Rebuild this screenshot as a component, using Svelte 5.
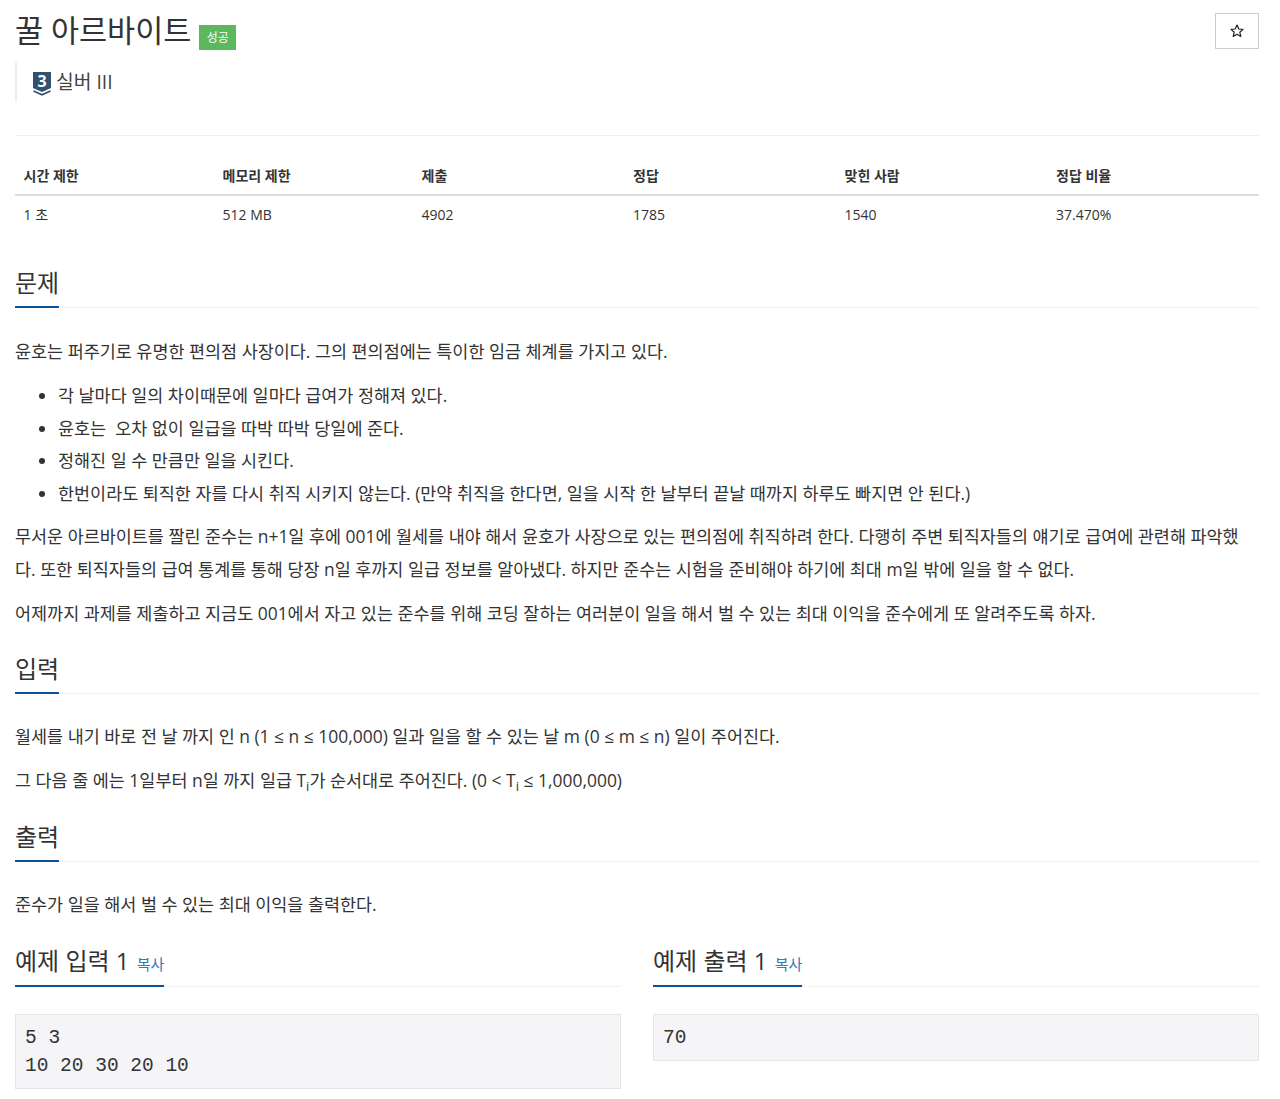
<script>
  const stats = [
    ['시간 제한', '1 초'],
    ['메모리 제한', '512 MB'],
    ['제출', '4902'],
    ['정답', '1785'],
    ['맞힌 사람', '1540'],
    ['정답 비율', '37.470%']
  ];
</script>

<div class="page">
  <header class="title">
    <div class="head-row">
      <h1>꿀 아르바이트 <span class="label">성공</span></h1>
      <button class="star" aria-label="즐겨찾기">
        <svg viewBox="0 0 16 16" width="16" height="16" aria-hidden="true">
          <path d="M8 2l1.8 4 4.2.4-3.2 2.8 1 4.3L8 11.2l-3.8 2.3 1-4.3L2 6.400 6.200 6z" fill="none" stroke="#222" stroke-width="1.2" stroke-linejoin="round" />
        </svg>
      </button>
    </div>
    <div class="tier">
      <svg class="tier-icon" viewBox="0 0 20 25" width="20" height="25" aria-hidden="true">
        <path d="M1 1h18v16l-9 4-9-4z" fill="#34506f" />
        <path d="M1.500 20l8.500 3.800 8.500-3.800" fill="none" stroke="#34506f" stroke-width="1.600" />
        <text x="10" y="16" text-anchor="middle" class="tier-num">3</text>
      </svg>
      <span class="tier-name">실버 III</span>
    </div>
  </header>

  <table>
    <thead>
      <tr>{#each stats as s}<th>{s[0]}</th>{/each}</tr>
    </thead>
    <tbody>
      <tr>{#each stats as s}<td>{s[1]}</td>{/each}</tr>
    </tbody>
  </table>

  <section class="problem">
    <div class="headline"><h2>문제</h2></div>
    <p>윤호는 퍼주기로 유명한 편의점 사장이다. 그의 편의점에는 특이한 임금 체계를 가지고 있다.</p>
    <ul>
      <li>각 날마다 일의 차이때문에 일마다 급여가 정해져 있다.</li>
      <li>윤호는&nbsp; 오차 없이 일급을 따박 따박 당일에 준다.</li>
      <li>정해진 일 수 만큼만 일을 시킨다.</li>
      <li>한번이라도 퇴직한 자를 다시 취직 시키지 않는다. (만약 취직을 한다면, 일을 시작 한 날부터 끝날 때까지 하루도 빠지면 안 된다.)</li>
    </ul>
    <p>무서운 아르바이트를 짤린 준수는 n+1일 후에 001에 월세를 내야 해서 윤호가 사장으로 있는 편의점에 취직하려 한다. 다행히 주변 퇴직자들의 얘기로 급여에 관련해 파악했다. 또한 퇴직자들의 급여 통계를 통해 당장 n일 후까지 일급 정보를 알아냈다. 하지만 준수는 시험을 준비해야 하기에 최대 m일 밖에 일을 할 수 없다.</p>
    <p>어제까지 과제를 제출하고 지금도 001에서 자고 있는 준수를 위해 코딩 잘하는 여러분이 일을 해서 벌 수 있는 최대 이익을 준수에게 또 알려주도록 하자.</p>
  </section>

  <section>
    <div class="headline"><h2>입력</h2></div>
    <p>월세를 내기 바로 전 날 까지 인 n (1 ≤ n ≤ 100,000) 일과 일을 할 수 있는 날 m (0 ≤ m ≤ n) 일이 주어진다.</p>
    <p>그 다음 줄 에는 1일부터 n일 까지 일급 T<sub>i</sub>가 순서대로 주어진다. (0 &lt; T<sub>i</sub> ≤ 1,000,000)</p>
  </section>

  <section class="output">
    <div class="headline"><h2>출력</h2></div>
    <p>준수가 일을 해서 벌 수 있는 최대 이익을 출력한다.</p>
  </section>

  <div class="samples">
    <section>
      <div class="headline"><h2>예제 입력 1 <a href="#copy" class="copy">복사</a></h2></div>
      <pre>5 3
10 20 30 20 10</pre>
    </section>
    <section>
      <div class="headline"><h2>예제 출력 1 <a href="#copy" class="copy">복사</a></h2></div>
      <pre>70</pre>
    </section>
  </div>
</div>

<style>
  :global(body) {
    background: #fff;
  }
  .page {
    padding: 0 21px 0 15px;
    height: 1099px;
    overflow: hidden;
    box-sizing: border-box;
    color: #333;
    font-family: 'Open Sans', 'Noto Sans CJK KR', sans-serif;
    font-size: 17.45px;
  }
  .title {
    padding-bottom: 33px;
    border-bottom: 1px solid #eee;
    margin-bottom: 20px;
  }
  .head-row {
    display: flex;
    justify-content: space-between;
    align-items: flex-start;
    height: 36px;
    padding-top: 13px;
  }
  h1 {
    margin: 1px 0 0;
    font-size: 30.5px;
    font-weight: 400;
    line-height: 33px;
  }
  .label {
    display: inline-block;
    background: #5cb85c;
    color: #fff;
    font-size: 12px;
    font-weight: 400;
    line-height: 25px;
    height: 25px;
    width: 37px;
    text-align: center;
    vertical-align: 0;
  }
  .star {
    display: flex;
    align-items: center;
    justify-content: center;
    width: 44px;
    height: 36px;
    background: #fff;
    border: 1px solid #ccc;
    padding: 0;
  }
  .tier {
    display: flex;
    align-items: center;
    gap: 4px;
    height: 40px;
    margin-top: 13px;
    padding-left: 15px;
    border-left: 2px solid #eee;
    font-size: 19.3px;
    color: #444;
  }
  .tier-icon {
    margin-top: 3px;
  }
  .tier-name {
    margin-top: -3px;
  }
  .tier-num {
    font: 700 16px 'Open Sans', sans-serif;
    fill: #fff;
  }
  table {
    width: 100%;
    border-collapse: collapse;
    table-layout: fixed;
    font-size: 14px;
    margin-bottom: 31px;
  }
  th:nth-child(1), th:nth-child(2) { width: 16%; }
  th {
    box-sizing: border-box;
    text-align: left;
    font-weight: 700;
    padding: 9px 9px 7px 8.5px;
    line-height: 22px;
    border-bottom: 2px solid #ddd;
  }
  td {
    padding: 7px 9px 8px 8.5px;
    line-height: 24px;
  }
  .headline {
    border-bottom: 1px dotted #e5e5e5;
    margin-bottom: 26px;
  }
  .problem .headline,
  .samples .headline {
    margin-bottom: 27px;
  }
  section {
    margin-top: 22px;
  }
  section.output {
    margin-top: 23px;
  }
  h2 {
    display: inline-block;
    margin: 0 0 -1px;
    padding-bottom: 7px;
    font-size: 24px;
    font-weight: 400;
    line-height: 33px;
    border-bottom: 2px solid #0a5299;
    vertical-align: bottom;
  }
  p {
    margin: 0 0 11px;
    line-height: 33px;
  }
  ul {
    margin: 0 0 10px;
    padding-left: 43px;
  }
  li {
    line-height: 32.7px;
  }
  sub {
    font-size: 13px;
    line-height: 0;
  }
  .samples {
    display: grid;
    grid-template-columns: 1fr 1fr;
    gap: 32px;
  }
  .samples section {
    margin-top: 12px;
  }
  .samples h2 {
    padding-bottom: 8px;
  }
  .copy {
    font-size: 15px;
    line-height: 1;
    color: #337ab7;
    text-decoration: none;
    margin-left: 1px;
  }
  pre {
    margin: 0;
    padding: 9.5px 9px 7.5px;
    background: #f5f5f8;
    border: 1px solid #e5e5e5;
    font-family: 'Liberation Mono', monospace;
    font-size: 19.5px;
    line-height: 28px;
    color: #333;
  }
</style>
